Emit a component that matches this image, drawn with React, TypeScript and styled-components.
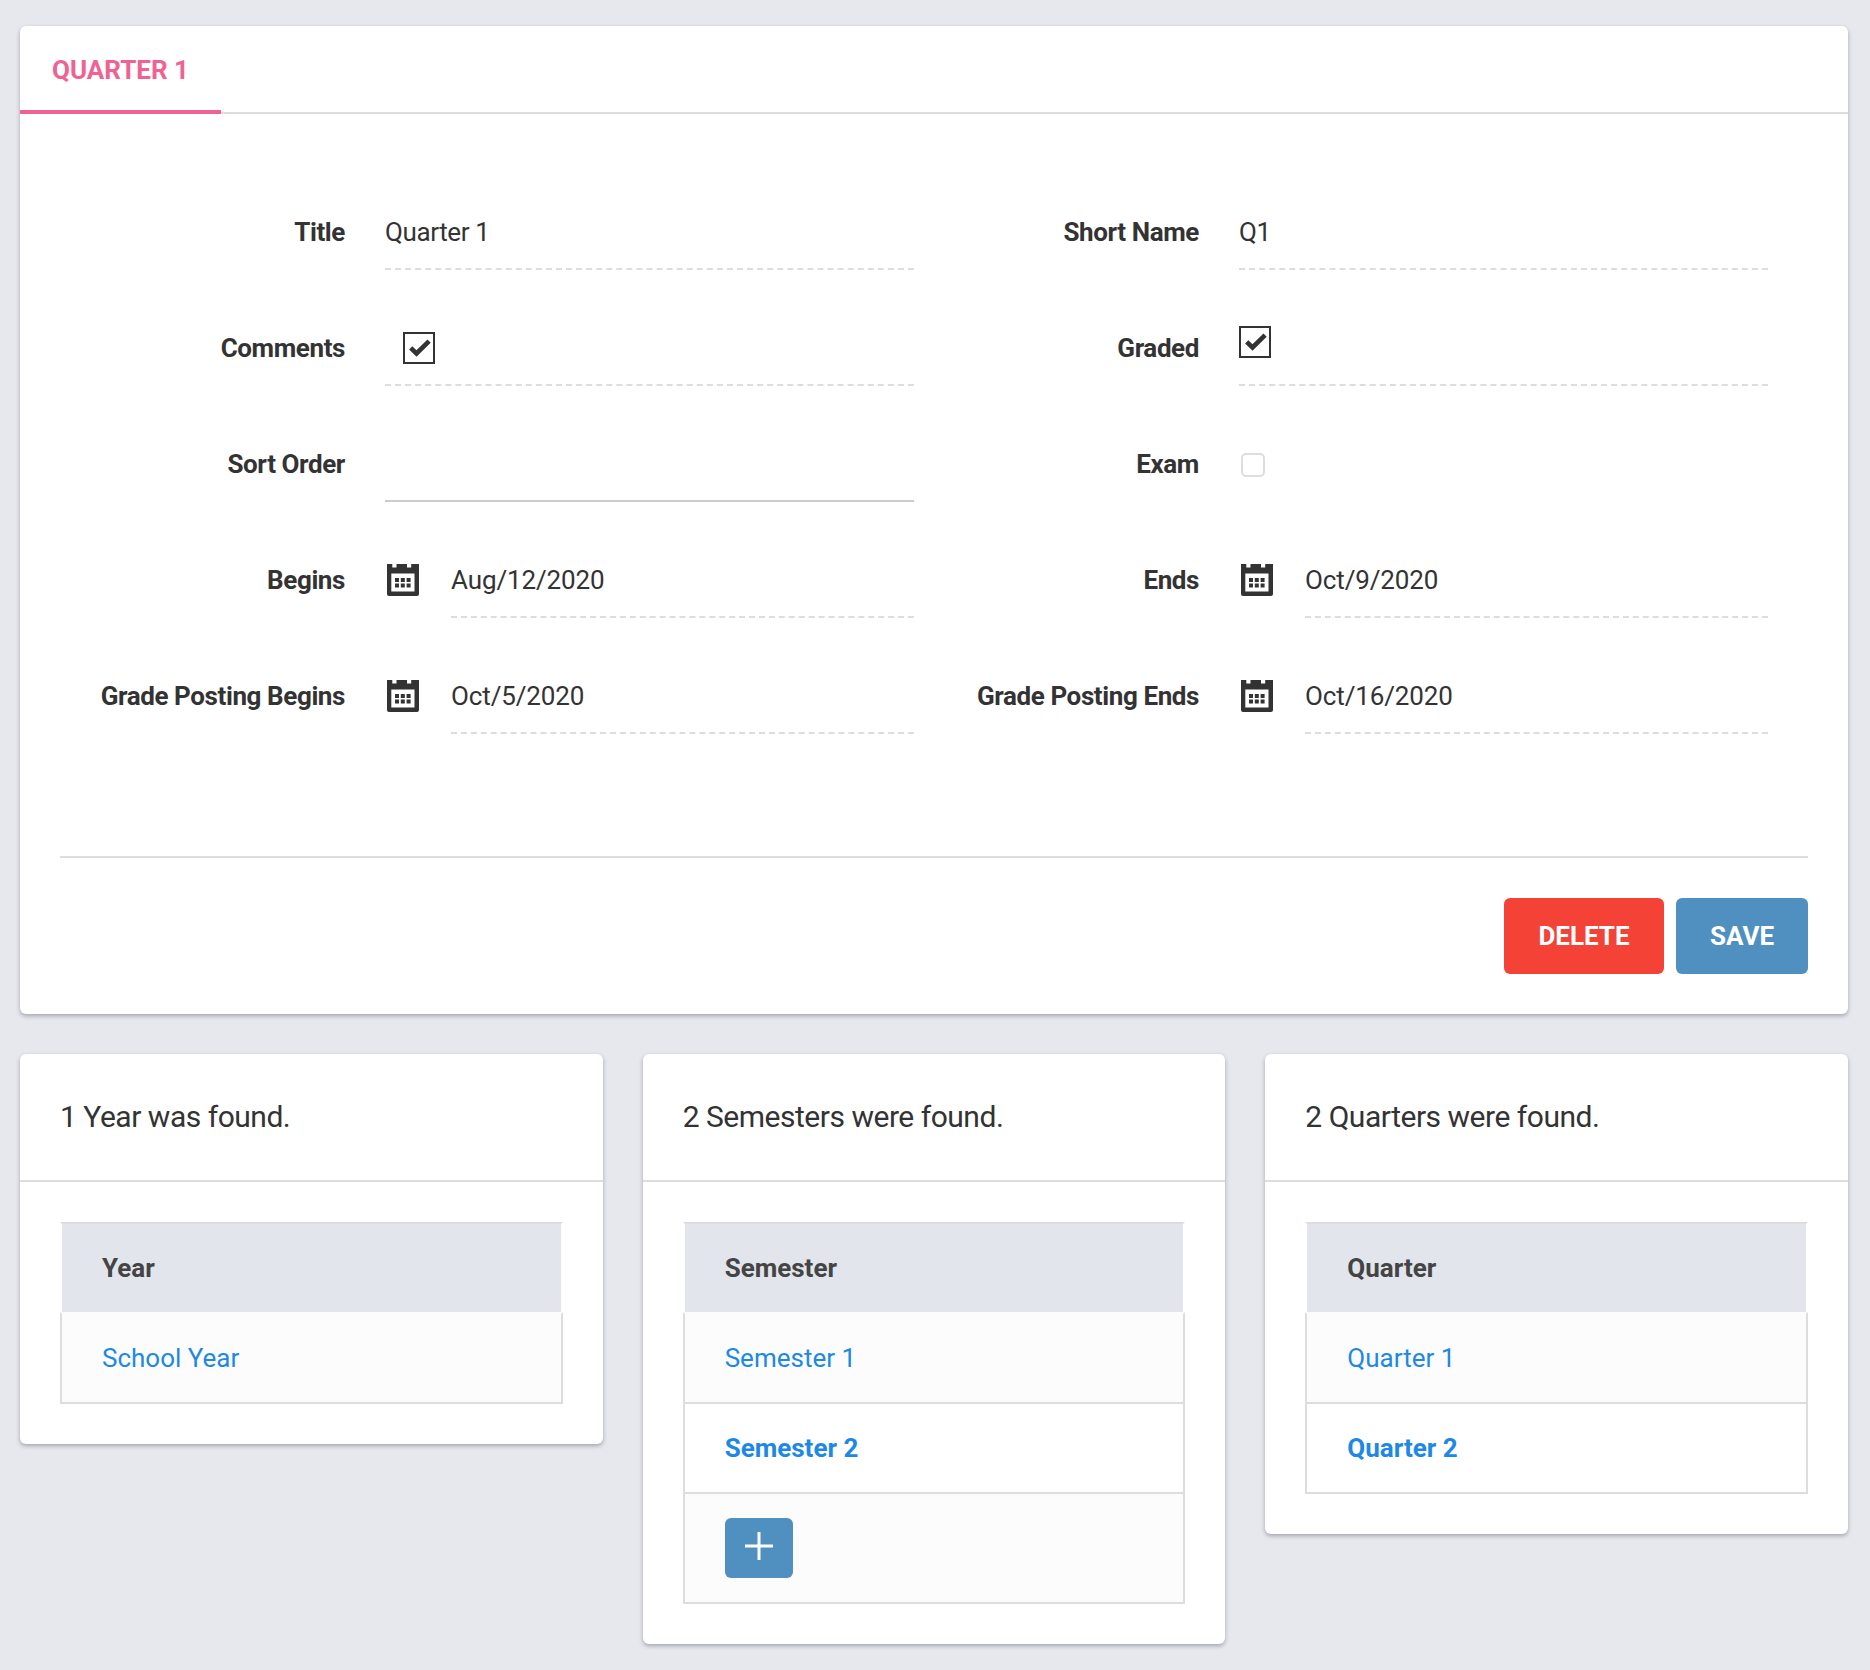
import React from "react";
import styled, { createGlobalStyle } from "styled-components";

const GlobalStyle = createGlobalStyle`
  html, body {
    margin: 0;
    padding: 0;
    background: #e6e8ed;
  }
  body {
    font-family: Roboto, "Liberation Sans", sans-serif;
    color: #333;
  }
`;

const CalendarIcon = () => (
  <CalendarSvg viewBox="0 0 32 32" width={32} height={32}>
    <path
      fill="#333"
      fillRule="evenodd"
      d="M0 0H5.3V3.5H9.5V0H20V3.5H24.2V0H32V30A2 2 0 0 1 30 32H2A2 2 0 0 1 0 30ZM4.3 9.5V27.5H27.5V9.5ZM8 14H12V18H8ZM13.8 14H17.8V18H13.8ZM19.6 14H23.6V18H19.6ZM8 19.6H12V23.6H8ZM13.8 19.6H17.8V23.6H13.8ZM19.6 19.6H23.6V23.6H19.6Z"
    />
  </CalendarSvg>
);

const CheckIcon = () => (
  <svg viewBox="2.5 2.5 27 27" width={27} height={27}>
    <path d="M7.2 15.4L13 21L25.6 8.6" fill="none" stroke="#333" strokeWidth={4.6} />
  </svg>
);

const PlusIcon = () => (
  <PlusSvg viewBox="0 0 30 30" width={30} height={30}>
    <path d="M15 1V29M1 15H29" fill="none" stroke="#fff" strokeWidth={3} />
  </PlusSvg>
);

const TextField = ({ label, value, solid }: { label: string; value?: string; solid?: boolean }) => (
  <FormRow>
    <Label>{label}</Label>
    <FieldLine $solid={solid}>{value}</FieldLine>
  </FormRow>
);

const CheckField = ({ label, $shifted }: { label: string; $shifted?: boolean }) => (
  <FormRow>
    <Label>{label}</Label>
    <FieldLine>
      <CheckBox $shifted={$shifted}>
        <CheckIcon />
      </CheckBox>
    </FieldLine>
  </FormRow>
);

const DateField = ({ label, value }: { label: string; value: string }) => (
  <FormRow>
    <Label>{label}</Label>
    <DateWrap>
      <CalendarIcon />
      <DateLine>{value}</DateLine>
    </DateWrap>
  </FormRow>
);

const ListCard = ({
  title,
  heading,
  rows,
  selected,
  canAdd,
}: {
  title: string;
  heading: string;
  rows: string[];
  selected?: string;
  canAdd?: boolean;
}) => (
  <SmallCard>
    <CardTitle>{title}</CardTitle>
    <CardBody>
      <ListTable>
        <ListHead>{heading}</ListHead>
        {rows.map((row) => (
          <ListRow key={row} $selected={row === selected}>
            <ListLink $selected={row === selected}>{row}</ListLink>
          </ListRow>
        ))}
        {canAdd && (
          <AddRow>
            <AddButton aria-label="Add">
              <PlusIcon />
            </AddButton>
          </AddRow>
        )}
      </ListTable>
    </CardBody>
  </SmallCard>
);

const App = () => (
  <Page>
    <GlobalStyle />
    <MainCard>
      <TabBar>
        <Tab>Quarter 1</Tab>
      </TabBar>
      <MainBody>
        <FormGrid>
          <TextField label="Title" value="Quarter 1" />
          <TextField label="Short Name" value="Q1" />
          <CheckField label="Comments" $shifted />
          <CheckField label="Graded" />
          <TextField label="Sort Order" solid />
          <FormRow>
            <Label>Exam</Label>
            <PlainField>
              <EmptyBox />
            </PlainField>
          </FormRow>
          <DateField label="Begins" value="Aug/12/2020" />
          <DateField label="Ends" value="Oct/9/2020" />
          <DateField label="Grade Posting Begins" value="Oct/5/2020" />
          <DateField label="Grade Posting Ends" value="Oct/16/2020" />
        </FormGrid>
        <Actions>
          <ActionButton $color="#f44336" $width={160}>Delete</ActionButton>
          <ActionButton $color="#5090c1" $width={132}>Save</ActionButton>
        </Actions>
      </MainBody>
    </MainCard>
    <ListGrid>
      <ListCard title="1 Year was found." heading="Year" rows={["School Year"]} />
      <ListCard
        title="2 Semesters were found."
        heading="Semester"
        rows={["Semester 1", "Semester 2"]}
        selected="Semester 2"
        canAdd
      />
      <ListCard
        title="2 Quarters were found."
        heading="Quarter"
        rows={["Quarter 1", "Quarter 2"]}
        selected="Quarter 2"
      />
    </ListGrid>
  </Page>
);

const Page = styled.div`
  padding: 26px 22px 26px 20px;
`;

const Card = styled.div`
  background: #fff;
  border-radius: 6px;
  box-shadow: 0 2px 4px rgba(40, 44, 60, 0.35);
`;

const MainCard = styled(Card)``;

const TabBar = styled.div`
  height: 88px;
  box-sizing: border-box;
  display: flex;
  border-bottom: 2px solid #ddd;
`;

const Tab = styled.div`
  width: 201px;
  height: 88px;
  flex: none;
  box-sizing: border-box;
  padding: 4px 32px 0;
  display: flex;
  align-items: center;
  border-bottom: 4px solid #f06292;
  color: #f06292;
  font-size: 26px;
  font-weight: 700;
  text-transform: uppercase;
  white-space: nowrap;
`;

const MainBody = styled.div`
  padding: 80px 40px 40px;
`;

const FormGrid = styled.div`
  display: grid;
  grid-template-columns: 1fr 1fr;
  column-gap: 0;
  row-gap: 40px;
  padding-right: 40px;
  padding-bottom: 122px;
  border-bottom: 2px solid #ddd;
`;

const FormRow = styled.div`
  display: flex;
  height: 76px;
`;

const Label = styled.div`
  width: 285px;
  margin-right: 40px;
  flex: none;
  text-align: right;
  font-size: 26px;
  font-weight: 700;
  letter-spacing: -0.4px;
  line-height: 76px;
  color: #333;
  white-space: nowrap;
`;

const FieldLine = styled.div<{ $solid?: boolean }>`
  flex: 1;
  height: 76px;
  box-sizing: border-box;
  padding-top: 2px;
  display: flex;
  align-items: center;
  font-size: 26px;
  letter-spacing: -0.4px;
  color: #333;
  border-bottom: 2px ${({ $solid }) => ($solid ? "solid #ccc" : "dashed #ddd")};
`;

const DateLine = styled(FieldLine)`
  letter-spacing: -0.12px;
`;

const PlainField = styled.div`
  flex: 1;
  height: 76px;
  display: flex;
  align-items: center;
`;

const DateWrap = styled.div`
  flex: 1;
  display: flex;
  gap: 32px;
  align-items: flex-start;
`;

const CalendarSvg = styled.svg`
  flex: none;
  margin: 22px 0 0 2px;
`;

const CheckBox = styled.div<{ $shifted?: boolean }>`
  width: 32px;
  height: 32px;
  box-sizing: border-box;
  border: 2.5px solid #333;
  display: flex;
  align-items: center;
  justify-content: center;
  margin-left: ${({ $shifted }) => ($shifted ? "18px" : "0")};
  margin-top: ${({ $shifted }) => ($shifted ? "0" : "-12px")};
`;

const EmptyBox = styled.div`
  width: 24px;
  height: 24px;
  box-sizing: border-box;
  margin: 2px 0 0 2px;
  border: 2px solid #ddd;
  border-radius: 5px;
  background: #fff;
`;

const Actions = styled.div`
  display: flex;
  justify-content: flex-end;
  gap: 12px;
  margin-top: 40px;
`;

const ActionButton = styled.button<{ $color: string; $width: number }>`
  width: ${({ $width }) => $width}px;
  height: 76px;
  padding: 0;
  border: 0;
  border-radius: 6px;
  background: ${({ $color }) => $color};
  color: #fff;
  font-family: inherit;
  font-size: 26px;
  font-weight: 700;
  text-transform: uppercase;
`;

const ListGrid = styled.div`
  display: grid;
  grid-template-columns: repeat(3, 1fr);
  gap: 40px;
  align-items: start;
  margin-top: 40px;
`;

const SmallCard = styled(Card)``;

const CardTitle = styled.div`
  padding: 40px;
  font-size: 30px;
  letter-spacing: -0.48px;
  line-height: 46px;
  color: #333;
  border-bottom: 2px solid #ddd;
`;

const CardBody = styled.div`
  padding: 40px;
`;

const ListTable = styled.div`
  display: flex;
  flex-direction: column;
`;

const ListHead = styled.div`
  height: 88px;
  padding: 0 40px;
  display: flex;
  align-items: center;
  background: #e2e5ec;
  background-clip: padding-box;
  border-top: 2px solid #ddd;
  border-left: 2px solid transparent;
  border-right: 2px solid transparent;
  font-size: 26px;
  font-weight: 700;
  color: #444;
`;

const ListRow = styled.div<{ $selected?: boolean }>`
  height: 88px;
  box-sizing: content-box;
  padding: 0 40px;
  display: flex;
  align-items: center;
  background: ${({ $selected }) => ($selected ? "#fff" : "#fcfcfc")};
  border: 2px solid #ddd;
  border-top-color: #fcfcfc;
  & + & {
    border-top: 0;
  }
`;

const ListLink = styled.a<{ $selected?: boolean }>`
  font-size: 26px;
  font-weight: ${({ $selected }) => ($selected ? 700 : 400)};
  color: #1e88e5;
`;

const AddRow = styled.div`
  padding: 24px 40px;
  background: #fcfcfc;
  border: 2px solid #ddd;
  border-top: 0;
`;

const AddButton = styled.button`
  width: 68px;
  height: 60px;
  padding: 0;
  border: 0;
  border-radius: 6px;
  background: #5090c1;
  display: flex;
  align-items: center;
  justify-content: center;
`;

const PlusSvg = styled.svg`
  margin-top: -4px;
`;

export default App;
